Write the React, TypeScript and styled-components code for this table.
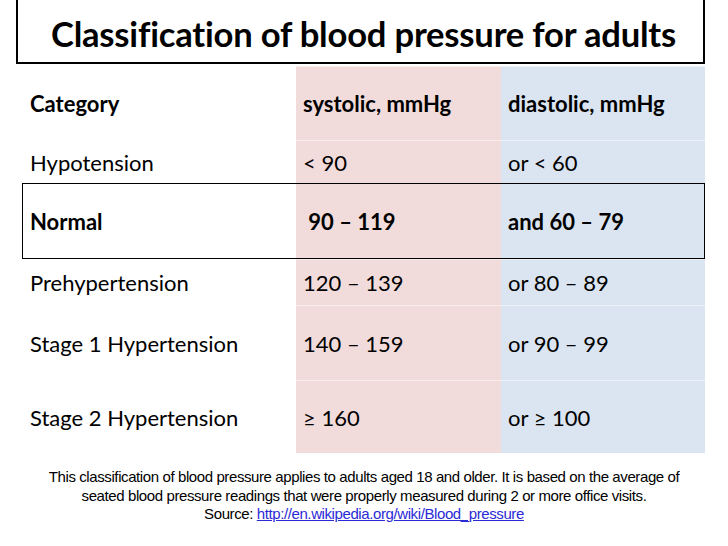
import React from 'react';
import styled, {createGlobalStyle} from 'styled-components';

const GlobalStyle = createGlobalStyle`
  html, body {
    margin: 0;
    padding: 0;
    background: #fff;
  }
`;

const Page = styled.div`
  width: 728px;
  height: 546px;
  display: flex;
  flex-direction: column;
  font-family: Lato, "Open Sans", sans-serif;
  color: #000;
  overflow: hidden;
`;

const TitleBox = styled.header`
  margin: 0 23px 0 16px;
  padding-left: 6px;
  height: 62px;
  border: 2px solid #000;
  border-top: none;
  display: flex;
  align-items: center;
  justify-content: center;
`;

const Title = styled.h1`
  margin: 5px 0 0;
  font-size: 34.6px;
  font-weight: 700;
  letter-spacing: -0.2px;
`;

const Table = styled.div`
  margin: 2px 23px 0 22px;
  display: flex;
  flex-direction: column;
`;

const Row = styled.div<{ $h: number; $boxed?: boolean; $bold?: boolean }>`
  display: grid;
  grid-template-columns: 274px 205px 1fr;
  height: ${p => p.$h}px;
  font-weight: ${p => (p.$bold ? 700 : 400)};
  outline: ${p => (p.$boxed ? '1.5px solid #000' : 'none')};
  outline-offset: -1px;
  position: relative;
`;

const Cell = styled.div<{ $tone?: 'pink' | 'blue' }>`
  display: flex;
  align-items: center;
  padding-left: ${p => (p.$tone ? 7 : 8)}px;
  font-size: 22px;
  white-space: pre;
  background: ${p => (p.$tone === 'pink' ? '#f2dcdb' : p.$tone === 'blue' ? '#dbe5f1' : 'transparent')};
  border-top: 1px solid ${p => (p.$tone ? 'rgba(255,255,255,0.45)' : 'transparent')};
`;

const Note = styled.div`
  margin-top: 15px;
  font-family: "Liberation Sans", Arial, sans-serif;
  font-size: 15px;
  line-height: 18.5px;
  letter-spacing: -0.4px;
  text-align: center;
  color: #000;
`;

const Link = styled.a`
  color: #2a2ad6;
  text-decoration: underline;
`;

const rows = [
  {h: 74, bold: true, cells: ['Category', 'systolic, mmHg', 'diastolic, mmHg']},
  {h: 43, cells: ['Hypotension', '< 90', 'or < 60']},
  {h: 76, bold: true, boxed: true, cells: ['Normal', ' 90 – 119', 'and 60 – 79']},
  {h: 46, cells: ['Prehypertension', '120 – 139', 'or 80 – 89']},
  {h: 75, cells: ['Stage 1 Hypertension', '140 – 159', 'or 90 – 99']},
  {h: 73, cells: ['Stage 2 Hypertension', '≥ 160', 'or ≥ 100']},
];

export default function App() {
  return (
    <Page>
      <GlobalStyle/>
      <TitleBox>
        <Title>Classification of blood pressure for adults</Title>
      </TitleBox>
      <Table>
        {rows.map((r, i) => (
          <Row key={i} $h={r.h} $bold={r.bold} $boxed={r.boxed}>
            <Cell>{r.cells[0]}</Cell>
            <Cell $tone="pink">{r.cells[1]}</Cell>
            <Cell $tone="blue">{r.cells[2]}</Cell>
          </Row>
        ))}
      </Table>
      <Note>
        This classification of blood pressure applies to adults aged 18 and older. It is based on the average of<br/>
        seated blood pressure readings that were properly measured during 2 or more office visits.<br/>
        Source: <Link href="#">http://en.wikipedia.org/wiki/Blood_pressure</Link>
      </Note>
    </Page>
  );
}
